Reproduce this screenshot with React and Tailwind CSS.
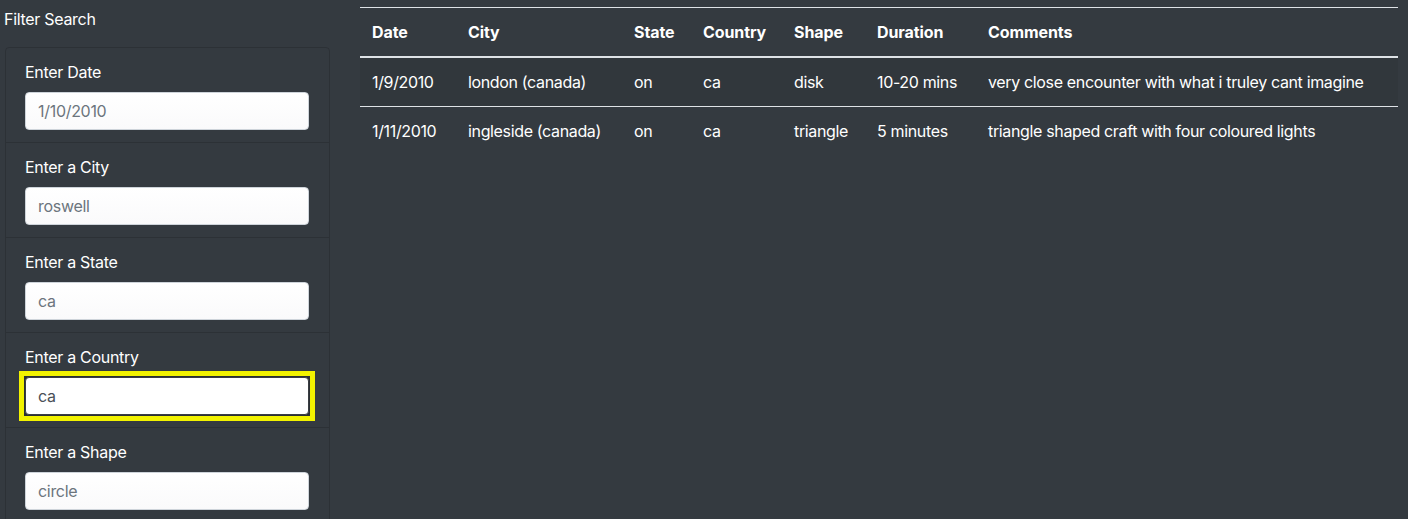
const filters = [
  { label: "Enter Date", placeholder: "1/10/2010" },
  { label: "Enter a City", placeholder: "roswell" },
  { label: "Enter a State", placeholder: "ca" },
  { label: "Enter a Country", placeholder: "ca", value: "ca", focused: true },
  { label: "Enter a Shape", placeholder: "circle" },
];

const sightings = [
  {
    date: "1/9/2010",
    city: "london (canada)",
    state: "on",
    country: "ca",
    shape: "disk",
    duration: "10-20 mins",
    comments: "very close encounter with what i truley cant imagine",
  },
  {
    date: "1/11/2010",
    city: "ingleside (canada)",
    state: "on",
    country: "ca",
    shape: "triangle",
    duration: "5 minutes",
    comments: "triangle shaped craft with four coloured lights",
  },
];

const FilterItem = ({ label, placeholder, value, focused }) => {
  const input = (
    <input
      type="text"
      placeholder={placeholder}
      defaultValue={value}
      className={
        "block w-full h-[38px] px-3 text-base rounded tracking-[-0.3px] text-[#495057] placeholder:text-[#6c757d] outline-none " +
        (focused
          ? "h-[36px] bg-white border border-[#3a3d42]"
          : "bg-gradient-to-b from-white to-[#fafafb] border border-[#ced4da]")
      }
    />
  );
  return (
    <li className="pl-[19px] pr-5 py-3 border-b border-black/15 last:border-b-0">
      <label className="block text-base leading-6 mb-2 text-white tracking-[-0.3px]">
        {label}
      </label>
      {focused ? (
        <div className="-m-[6px] border-[5px] border-[#f2f200] bg-[#2b2f35] p-px">{input}</div>
      ) : (
        input
      )}
    </li>
  );
};

const App = () => {
  return (
    <div
      className="min-h-screen bg-[#343a40] text-white flex"
      style={{ fontFamily: "Inter, 'Liberation Sans', sans-serif" }}
    >
      <aside className="w-[330px] shrink-0 pl-[5px]">
        <h6 className="text-base leading-6 pt-[7px] -ml-px tracking-[-0.3px]">Filter Search</h6>
        <ul className="mt-4 border border-black/15 rounded">
          {filters.map((f) => (
            <FilterItem key={f.label} {...f} />
          ))}
        </ul>
      </aside>

      <main className="flex-1 pl-[30px] pr-[10px] pt-[7px]">
        <table className="w-full text-base text-left border-collapse tracking-[-0.35px]">
          <thead>
            <tr className="border-t border-[#dee2e6] border-b-2">
              <th className="w-[96px] px-3 py-3 font-bold tracking-[-0.1px]">Date</th>
              <th className="w-[166px] px-3 py-3 font-bold tracking-[-0.1px]">City</th>
              <th className="w-[69px] px-3 py-3 font-bold tracking-[-0.1px]">State</th>
              <th className="w-[91px] px-3 py-3 font-bold tracking-[-0.1px]">Country</th>
              <th className="w-[83px] px-3 py-3 font-bold tracking-[-0.1px]">Shape</th>
              <th className="w-[111px] px-3 py-3 font-bold tracking-[-0.1px]">Duration</th>
              <th className="px-3 py-3 font-bold tracking-[-0.1px]">Comments</th>
            </tr>
          </thead>
          <tbody>
            {sightings.map((s, i) => (
              <tr
                key={s.date}
                className={
                  "border-b border-[#dee2e6] last:border-b-0 " +
                  (i % 2 === 0 ? "bg-black/5" : "")
                }
              >
                <td className="px-3 py-3">{s.date}</td>
                <td className="px-3 py-3">{s.city}</td>
                <td className="px-3 py-3">{s.state}</td>
                <td className="px-3 py-3">{s.country}</td>
                <td className="px-3 py-3">{s.shape}</td>
                <td className="px-3 py-3">{s.duration}</td>
                <td className="px-3 py-3">{s.comments}</td>
              </tr>
            ))}
          </tbody>
        </table>
      </main>
    </div>
  );
};

export default App;
